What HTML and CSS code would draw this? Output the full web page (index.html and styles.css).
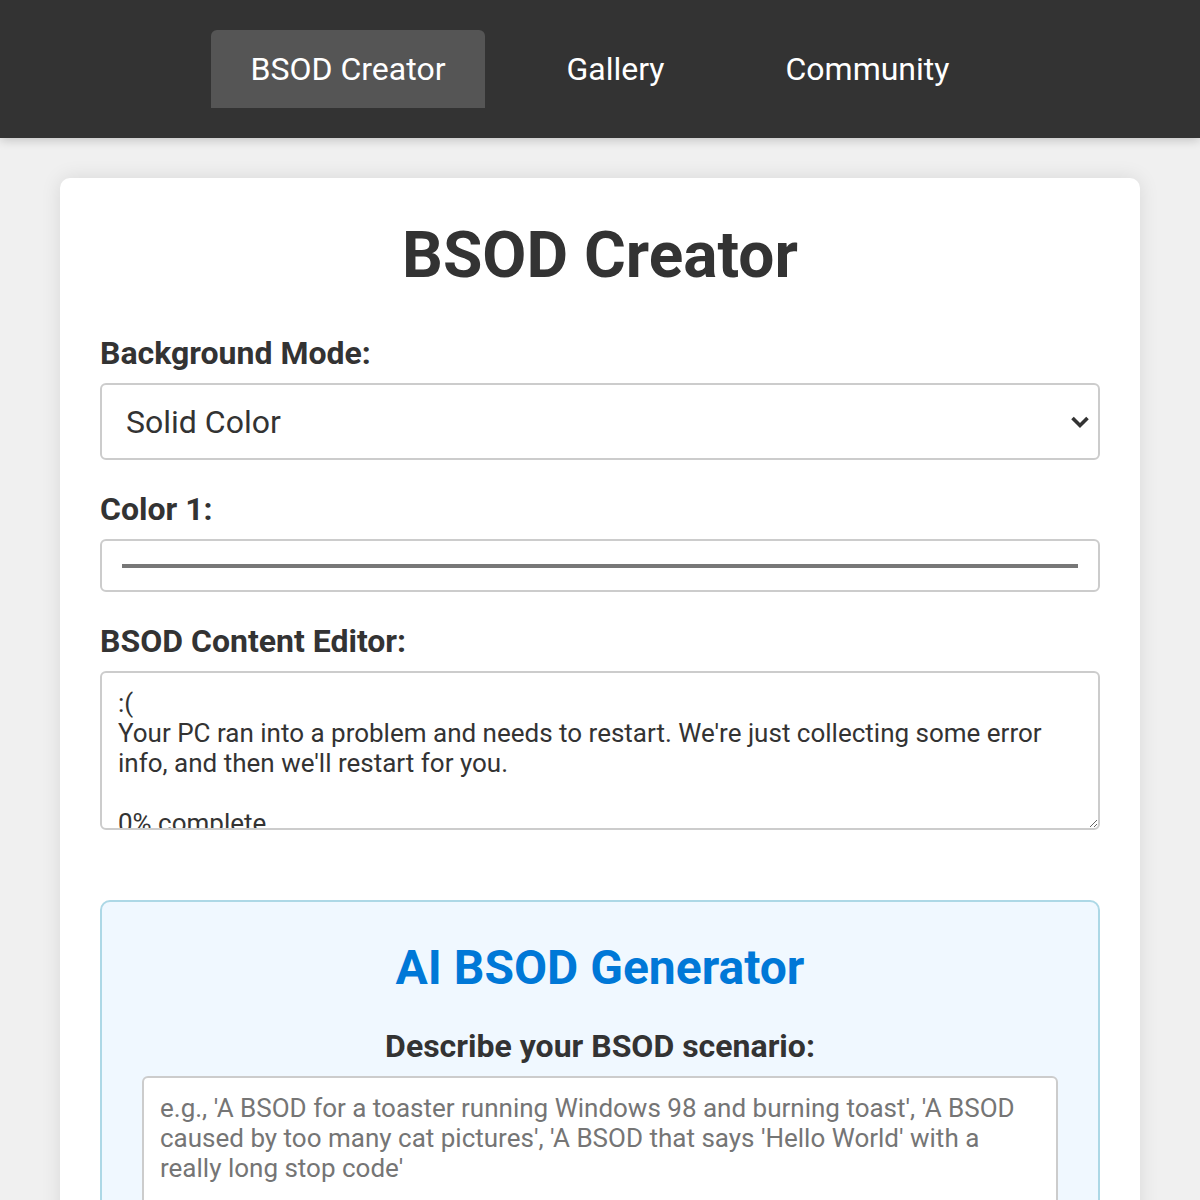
FILE: index.html
```html
<!DOCTYPE html>
<html lang="en">
<head>
<meta charset="utf-8">
<title>BSOD Creator</title>
<link rel="stylesheet" href="styles.css">
</head>
<body>
<nav class="topnav">
  <a class="tab active" href="#">BSOD Creator</a>
  <a class="tab" href="#">Gallery</a>
  <a class="tab" href="#">Community</a>
</nav>
<main class="card">
  <h1 class="title">BSOD Creator</h1>
  <label class="label">Background Mode:</label>
  <div class="select">
    <span>Solid Color</span>
    <svg class="chev" width="20" height="14" viewBox="0 0 20 14"><path d="M2.5 3 L10 10.5 L17.5 3" fill="none" stroke="#333" stroke-width="3.6"/></svg>
  </div>
  <label class="label">Color 1:</label>
  <div class="color-input"><div class="swatch"></div></div>
  <label class="label">BSOD Content Editor:</label>
  <textarea class="editor">:(
Your PC ran into a problem and needs to restart. We're just collecting some error info, and then we'll restart for you.

0% complete

For more information about this issue and possible fixes, visit https://www.windows.com/stopcode</textarea>
  <section class="ai-box">
    <h2 class="ai-title">AI BSOD Generator</h2>
    <label class="ai-label">Describe your BSOD scenario:</label>
    <textarea class="prompt" placeholder="e.g., 'A BSOD for a toaster running Windows 98 and burning toast', 'A BSOD caused by too many cat pictures', 'A BSOD that says 'Hello World' with a really long stop code'"></textarea>
  </section>
</main>
</body>
</html>
```
FILE: styles.css
```css
* { box-sizing: border-box; }
body {
  margin: 0;
  background: #f0f0f0;
  font-family: Roboto, "Noto Sans", sans-serif;
  color: #333;
}
.topnav {
  background: #333;
  display: flex;
  justify-content: center;
  gap: 41px;
  padding: 30px 0;
  box-shadow: 0 2px 10px rgba(0,0,0,0.2);
}
.tab {
  color: #fff;
  text-decoration: none;
  font-size: 32px;
  line-height: 78px;
  height: 78px;
  padding: 0 40px;
  border-radius: 6px 6px 0 0;
}
.tab.active { background: #555; }
.card {
  background: #fff;
  margin: 40px 60px;
  border-radius: 10px;
  box-shadow: 0 0 20px rgba(0,0,0,0.1);
  padding: 40px;
  display: flex;
  flex-direction: column;
}
.title {
  margin: 0 0 40px;
  text-align: center;
  font-size: 64px;
  line-height: 76px;
  font-weight: 700;
  color: #333;
}
.label {
  font-size: 32px;
  font-weight: 700;
  line-height: 38px;
  margin-bottom: 11px;
}
.select {
  height: 77px;
  border: 2px solid #ccc;
  border-radius: 6px;
  display: flex;
  align-items: center;
  justify-content: space-between;
  padding: 0 8px 0 24px;
  font-size: 32px;
  margin-bottom: 30px;
}
.color-input {
  height: 53px;
  border: 2px solid #ccc;
  border-radius: 6px;
  padding: 0 20px;
  display: flex;
  align-items: center;
  margin-bottom: 30px;
}
.swatch {
  flex: 1;
  height: 4px;
  background: #777;
}
.editor {
  height: 159px;
  border: 2px solid #ccc;
  border-radius: 6px;
  padding: 15px 16px;
  font-family: Roboto, "Noto Sans", sans-serif;
  font-size: 26px;
  line-height: 30px;
  color: #333;
  resize: vertical;
  overflow: hidden;
  margin: 0 0 70px;
}
.ai-box {
  background: #f0f8ff;
  border: 2px solid #add8e6;
  border-radius: 10px;
  padding: 36px 40px;
  display: flex;
  flex-direction: column;
  align-items: center;
}
.ai-title {
  margin: 0 0 29px;
  font-size: 48px;
  line-height: 60px;
  font-weight: 700;
  color: #0078d7;
}
.ai-label {
  font-size: 32px;
  font-weight: 700;
  line-height: 38px;
  margin-bottom: 11px;
}
.prompt {
  width: 100%;
  height: 160px;
  border: 2px solid #ccc;
  border-radius: 6px;
  padding: 15px 16px;
  font-family: Roboto, "Noto Sans", sans-serif;
  font-size: 26px;
  line-height: 30px;
  resize: vertical;
}
.prompt::placeholder { color: #757575; }
```
